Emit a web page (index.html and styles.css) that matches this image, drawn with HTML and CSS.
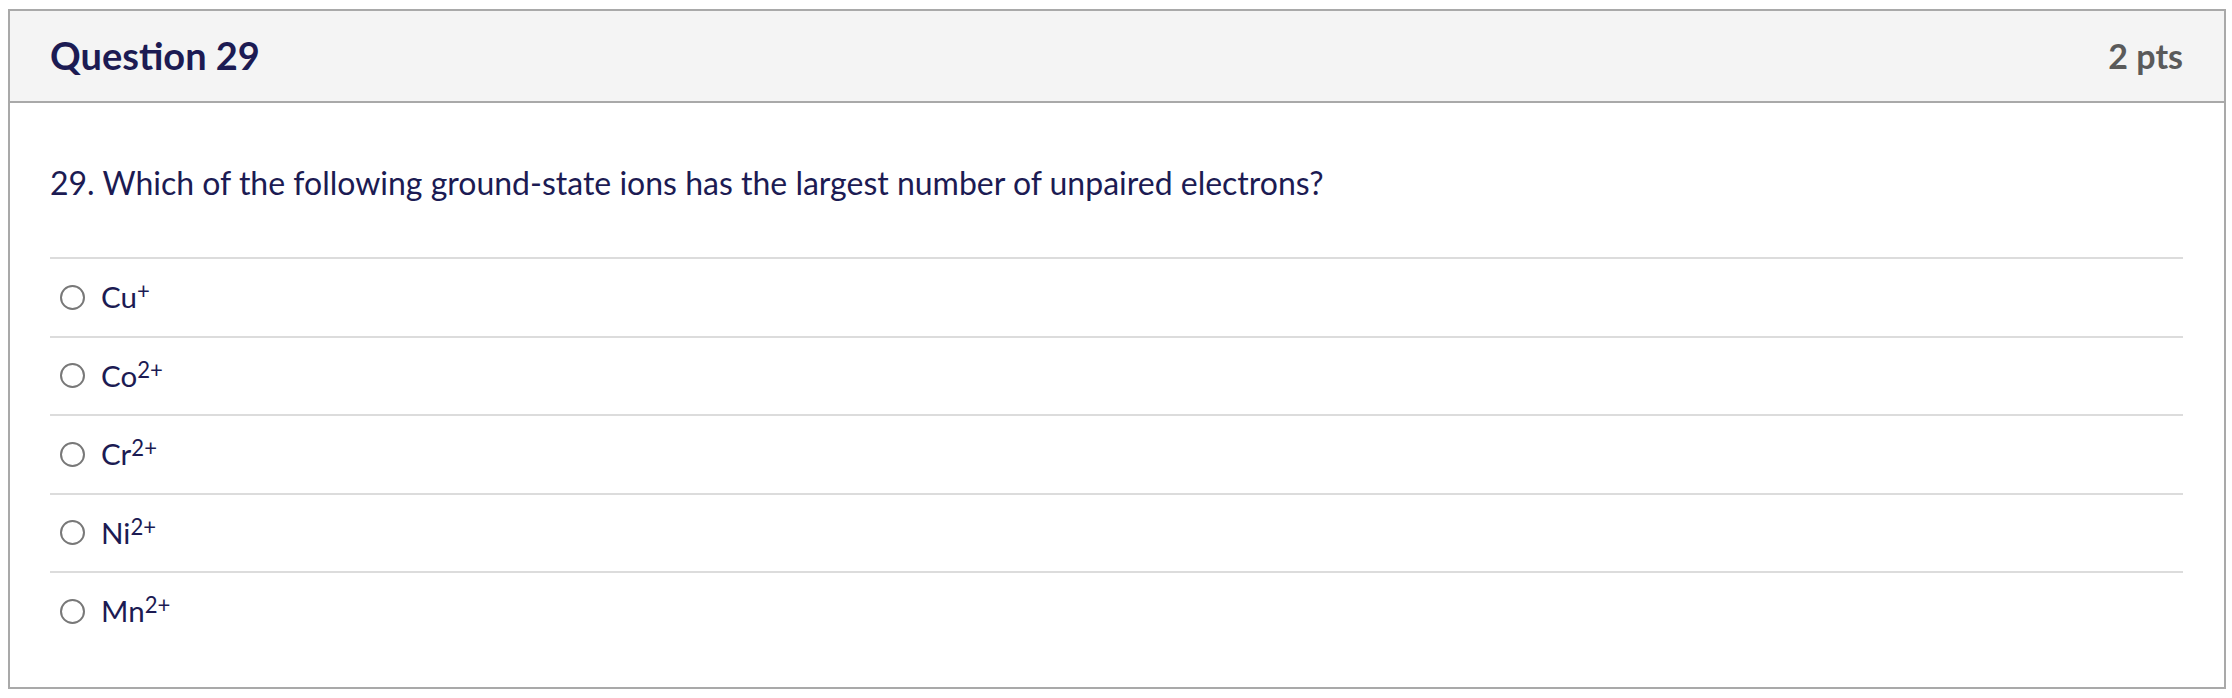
FILE: index.html
```html
<!DOCTYPE html>
<html lang="en">
<head>
<meta charset="utf-8">
<title>Question 29</title>
<link rel="stylesheet" href="styles.css">
</head>
<body>
<div class="question">
  <div class="header">
    <h2 class="title">Question 29</h2>
    <span class="points">2 pts</span>
  </div>
  <div class="content">
    <p class="text">29. Which of the following ground-state ions has the largest number of unpaired electrons?</p>
    <div class="answers">
      <label class="answer"><input type="radio" name="q29" class="radio"><span class="label">Cu<sup>+</sup></span></label>
      <label class="answer"><input type="radio" name="q29" class="radio"><span class="label">Co<sup>2+</sup></span></label>
      <label class="answer"><input type="radio" name="q29" class="radio"><span class="label">Cr<sup>2+</sup></span></label>
      <label class="answer"><input type="radio" name="q29" class="radio"><span class="label">Ni<sup>2+</sup></span></label>
      <label class="answer"><input type="radio" name="q29" class="radio"><span class="label">Mn<sup>2+</sup></span></label>
    </div>
  </div>
</div>
</body>
</html>
```

FILE: styles.css
```css
html, body {
  background: #ffffff;
}
body {
  margin: 9px 6px 0 8px;
  font-family: Lato, "Open Sans", sans-serif;
  color: #1c1b53;
}
.question {
  border: 2px solid #a9a9a9;
}
.header {
  display: flex;
  align-items: center;
  justify-content: space-between;
  height: 90px;
  padding: 0 41px 0 40px;
  background: #f4f4f4;
  border-bottom: 2px solid #a9a9a9;
}
.title {
  margin: 0;
  font-size: 38px;
  font-weight: 700;
  line-height: 1.2;
  color: #1c1b53;
}
.points {
  font-size: 34px;
  font-weight: 700;
  line-height: 1.2;
  color: #5a5a5a;
}
.content {
  padding: 57px 41px 37.5px 40px;
}
.text {
  margin: 0 0 52px 0;
  font-size: 32px;
  line-height: 45px;
}
.answers {
  display: flex;
  flex-direction: column;
}
.answer {
  display: flex;
  align-items: center;
  gap: 16px;
  height: 76.5px;
  padding-left: 10px;
  border-top: 2px solid #dcdcdc;
  font-size: 29.5px;
}
.radio {
  appearance: none;
  -webkit-appearance: none;
  box-sizing: border-box;
  width: 25px;
  height: 25px;
  margin: 0;
  border: 2px solid #787878;
  border-radius: 50%;
  background: #fff;
}
.label {
  line-height: 36px;
}
.label sup {
  font-size: 75%;
  line-height: 0;
  vertical-align: 9px;
}
```
